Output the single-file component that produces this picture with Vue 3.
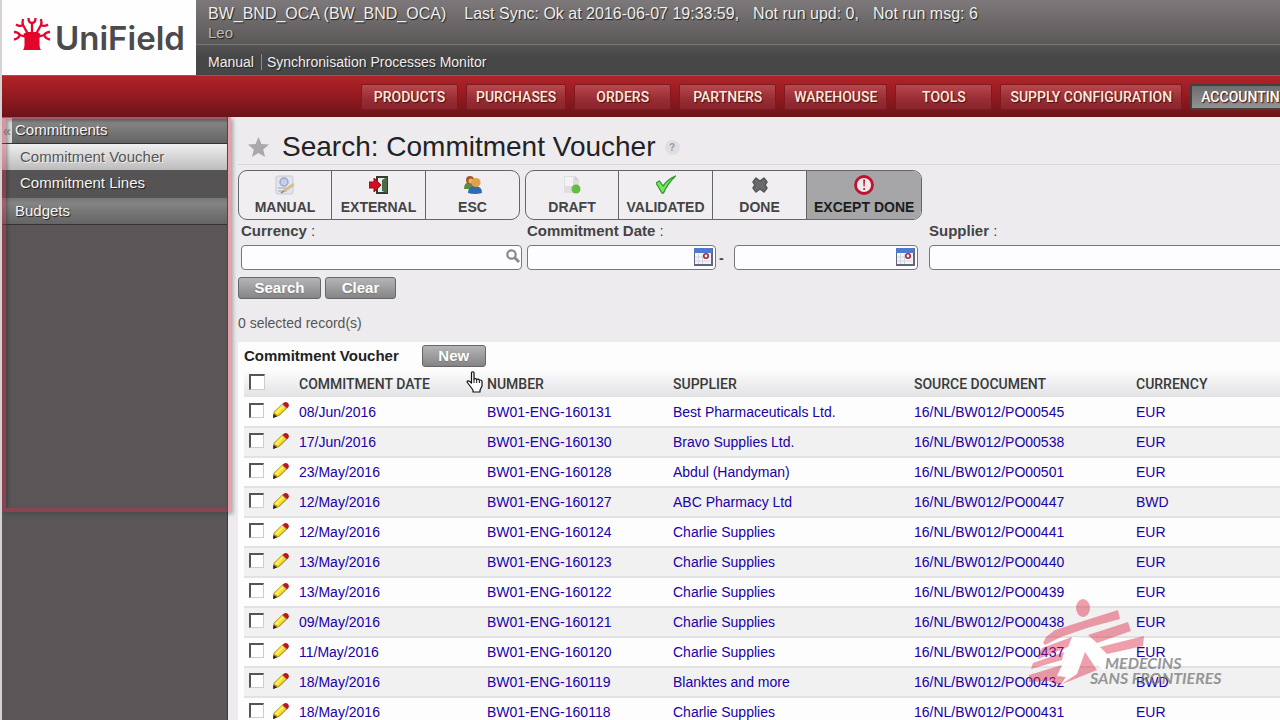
<script setup>
import { ref } from 'vue'

const tabs = ['Products', 'Purchases', 'Orders', 'Partners', 'Warehouse', 'Tools', 'Supply Configuration', 'Accounting']
const activeTab = 'Accounting'

const filterGroups = [
  [
    { label: 'Manual', icon: 'manual' },
    { label: 'External', icon: 'external' },
    { label: 'Esc', icon: 'esc' }
  ],
  [
    { label: 'Draft', icon: 'draft' },
    { label: 'Validated', icon: 'validated' },
    { label: 'Done', icon: 'done' },
    { label: 'Except Done', icon: 'except', active: true }
  ]
]

const currency = ref('')
const dateFrom = ref('')
const dateTo = ref('')
const supplier = ref('')

const rows = [
  ['08/Jun/2016', '160131', 'Best Pharmaceuticals Ltd.', '545', 'EUR'],
  ['17/Jun/2016', '160130', 'Bravo Supplies Ltd.', '538', 'EUR'],
  ['23/May/2016', '160128', 'Abdul (Handyman)', '501', 'EUR'],
  ['12/May/2016', '160127', 'ABC Pharmacy Ltd', '447', 'BWD'],
  ['12/May/2016', '160124', 'Charlie Supplies', '441', 'EUR'],
  ['13/May/2016', '160123', 'Charlie Supplies', '440', 'EUR'],
  ['13/May/2016', '160122', 'Charlie Supplies', '439', 'EUR'],
  ['09/May/2016', '160121', 'Charlie Supplies', '438', 'EUR'],
  ['11/May/2016', '160120', 'Charlie Supplies', '437', 'EUR'],
  ['18/May/2016', '160119', 'Blanktes and more', '432', 'BWD'],
  ['18/May/2016', '160118', 'Charlie Supplies', '431', 'EUR']
].map(([date, num, sup, po, cur]) => ({
  date,
  number: `BW01-ENG-${num}`,
  supplier: sup,
  source: `16/NL/BW012/PO00${po}`,
  currency: cur
}))
</script>

<template>
  <div class="page">
    <header class="top">
      <a href="#" class="logo" aria-label="UniField">
        <svg class="tree" viewBox="0 0 38 34" aria-hidden="true">
          <path d="M10 33q1.500-2 1.500-5v-8l-1-3 3-2h11l3 2-1 3v8q0 3 1.500 5z" fill="#e2062c" />
          <g fill="none" stroke="#e2062c" stroke-width="2.300" stroke-linejoin="round">
            <path d="M19 16V6M15.500 1q0 5 3.500 5t3.500-5" />
            <path d="M15 17 10 8M10 2q-1 4 0 6-3 2-7-.500" />
            <path d="M23 17 28 8M28 2q1 4 0 6 3 2 7-.500" />
            <path d="M13 20 7 18M1 15q4 0 6 3-2 4-6 4.500" />
            <path d="M25 20 31 18M37 15q-4 0-6 3 2 4 6 4.500" />
          </g>
        </svg>
        <span class="brand">UniField</span>
      </a>
      <div class="info">
        <div class="status">
          <div class="status-line">
            <span class="db">BW_BND_OCA (BW_BND_OCA)</span>
            <span>Last Sync: Ok at 2016-06-07 19:33:59,</span>
            <span>Not run upd: 0,</span>
            <span>Not run msg: 6</span>
          </div>
          <div class="user">Leo</div>
        </div>
        <nav class="shortcuts" aria-label="Shortcuts">
          <a href="#">Manual</a>
          <a href="#">Synchronisation Processes Monitor</a>
        </nav>
      </div>
    </header>

    <nav class="tabs" aria-label="Applications">
      <a v-for="t in tabs" :key="t" href="#" :class="{ active: t === activeTab }">{{ t.toUpperCase() }}</a>
    </nav>

    <div class="body">
      <aside class="side">
        <button class="collapse" aria-label="Collapse menu">«</button>
        <nav aria-label="Menu">
          <a href="#" class="group">Commitments</a>
          <a href="#" class="item current">Commitment Voucher</a>
          <a href="#" class="item">Commitment Lines</a>
          <a href="#" class="group">Budgets</a>
        </nav>
        <div class="highlight"></div>
      </aside>

      <main class="main">
        <div class="title">
          <svg class="star" viewBox="0 0 20 20" aria-hidden="true">
            <path d="M10 0l2.8 6.6 7.2.6-5.500 4.700 1.700 7.100L10 15.200 3.800 19l1.700-7.100L0 7.200l7.200-.6z" fill="#a9a8aa" />
          </svg>
          <h1>Search: Commitment Voucher</h1>
          <button class="help" aria-label="Help">?</button>
        </div>

        <div class="filters">
          <div v-for="(g, i) in filterGroups" :key="i" class="filter-group">
            <button v-for="f in g" :key="f.label" :class="{ active: f.active }">
              <svg v-if="f.icon === 'manual'" viewBox="0 0 20 20" aria-hidden="true">
                <rect x="1" y="1" width="17" height="18" rx="2" fill="#e3e5ee" stroke="#c6c9d2" />
                <circle cx="9" cy="7" r="4" fill="#c3d0e8" stroke="#9aa9c6" stroke-width="1.500" />
                <path d="M3 13h9M3 16h9" stroke="#b9bdcb" stroke-width="1.500" />
                <path d="M8 15l10-7 1.500 2.500L10 17l-3 1z" fill="#d8bd8a" />
                <path d="M6 18l3-2" stroke="#888" stroke-width="1.500" />
              </svg>
              <svg v-else-if="f.icon === 'external'" viewBox="0 0 20 20" aria-hidden="true">
                <path d="M7 1h12v18H7z" fill="#333a33" />
                <path d="M9 3h8v14H9z" fill="#e9ece7" />
                <path d="M13 5l5-3v16l-5-2z" fill="#4a6b45" />
                <path d="M0 7h5V3l7 7-7 7v-4H0z" fill="#d40d23" stroke="#91101b" />
              </svg>
              <svg v-else-if="f.icon === 'esc'" viewBox="0 0 20 20" aria-hidden="true">
                <path d="M1 14q0-7 6-7t5 7z" fill="#5e8c3a" />
                <circle cx="7" cy="5" r="4" fill="#a4582a" />
                <circle cx="8" cy="6" r="2.500" fill="#e9b374" />
                <path d="M5 18q0-7 7-7t7 7q-7 2-14 0z" fill="#2f6bb4" />
                <circle cx="13" cy="7.500" r="4.600" fill="#e2a04a" />
              </svg>
              <svg v-else-if="f.icon === 'draft'" viewBox="0 0 20 20" aria-hidden="true">
                <path d="M2 1h11l4 4v13H2z" fill="#dedee2" />
                <path d="M3 2h8v9H3z" fill="#f3f3f5" />
                <path d="M13 1l4 4h-4z" fill="#e4c6c0" />
                <circle cx="14" cy="14" r="4.500" fill="#62bd45" />
              </svg>
              <svg v-else-if="f.icon === 'validated'" viewBox="0 0 20 20" aria-hidden="true">
                <path d="M0 8l3.500-2 3.500 5Q12 4 19.500 1 12 8 7.500 18H6z" fill="#7be35f" stroke="#2e9a35" stroke-width="1.300" stroke-linejoin="round" />
              </svg>
              <svg v-else-if="f.icon === 'done'" viewBox="0 0 20 20" aria-hidden="true">
                <path d="M6 3l4 3 4-3 3 4-2 3 2 3-3 4-4-3-4 3-3-4 2-3-2-3z" fill="#6a6a6c" stroke="#58585a" stroke-width="1.500" stroke-linejoin="round" />
              </svg>
              <svg v-else viewBox="0 0 20 20" aria-hidden="true">
                <circle cx="10" cy="10" r="8.500" fill="#f3e9ea" stroke="#bf1230" stroke-width="2.800" />
                <path d="M9.200 4.500h1.800l-.4 7h-1z" fill="#b8122c" />
                <circle cx="10.100" cy="14" r="1" fill="#b8122c" />
              </svg>
              <span>{{ f.label.toUpperCase() }}</span>
            </button>
          </div>
        </div>

        <form class="search" @submit.prevent>
          <div class="fields">
            <div class="field">
              <label for="currency">Currency<i> :</i></label>
              <div class="box">
                <input id="currency" v-model="currency" type="text" />
                <svg class="lens" viewBox="0 0 14 14" aria-hidden="true">
                  <circle cx="5.500" cy="5.500" r="4.200" fill="none" stroke="#8a8a8c" stroke-width="2.200" />
                  <path d="M8.500 8.500l4.500 4.500" stroke="#8a8a8c" stroke-width="2.800" />
                </svg>
              </div>
            </div>
            <div class="field">
              <label for="from">Commitment Date<i> :</i></label>
              <div class="range">
                <div class="box">
                  <input id="from" v-model="dateFrom" type="text" />
                  <svg class="cal" viewBox="0 0 19 18" aria-hidden="true">
                    <path d="M0 0h19v18H0z" fill="#62667f" />
                    <path d="M1 0h16v16H1z" fill="#f4f4f8" />
                    <path d="M0 0h18v5H0z" fill="#4f7ad0" />
                    <path d="M1 9h15M1 13h15M4.500 6v10M8.500 6v10" stroke="#d4d5de" />
                    <circle cx="12" cy="8" r="2.200" fill="#fff" stroke="#a3263d" stroke-width="1.600" />
                  </svg>
                </div>
                <b>-</b>
                <div class="box">
                  <input v-model="dateTo" type="text" aria-label="Commitment Date to" />
                  <svg class="cal" viewBox="0 0 19 18" aria-hidden="true">
                    <path d="M0 0h19v18H0z" fill="#62667f" />
                    <path d="M1 0h16v16H1z" fill="#f4f4f8" />
                    <path d="M0 0h18v5H0z" fill="#4f7ad0" />
                    <path d="M1 9h15M1 13h15M4.500 6v10M8.500 6v10" stroke="#d4d5de" />
                    <circle cx="12" cy="8" r="2.200" fill="#fff" stroke="#a3263d" stroke-width="1.600" />
                  </svg>
                </div>
              </div>
            </div>
            <div class="field wide">
              <label for="supplier">Supplier<i> :</i></label>
              <div class="box"><input id="supplier" v-model="supplier" type="text" /></div>
            </div>
          </div>
          <div class="actions">
            <button class="btn search-btn" type="submit">Search</button>
            <button class="btn clear-btn" type="reset">Clear</button>
          </div>
        </form>

        <p class="count">0 selected record(s)</p>

        <section class="list">
          <div class="list-head">
            <h2>Commitment Voucher</h2>
            <button class="btn new-btn">New</button>
          </div>
          <table>
            <colgroup>
              <col class="c-check" /><col class="c-edit" /><col class="c-date" /><col class="c-num" />
              <col class="c-sup" /><col class="c-src" /><col />
            </colgroup>
            <thead>
              <tr>
                <th><input type="checkbox" aria-label="Select all" /></th>
                <th></th>
                <th>COMMITMENT DATE</th>
                <th>NUMBER</th>
                <th>SUPPLIER</th>
                <th>SOURCE DOCUMENT</th>
                <th>CURRENCY</th>
              </tr>
            </thead>
            <tbody>
              <tr v-for="r in rows" :key="r.number">
                <td><input type="checkbox" :aria-label="'Select ' + r.number" /></td>
                <td>
                  <button class="edit" :aria-label="'Edit ' + r.number">
                    <svg viewBox="0 0 16 16" aria-hidden="true">
                      <path d="M0 16l.5-6L10 1l5 4.500L6 14z" fill="#b08f22" />
                      <path d="M1 10.500L9.500 2l4 3.500L5 13.500z" fill="#f7df21" />
                      <path d="M2 11L10 3l1.200 1L3.500 12z" fill="#fff27a" />
                      <path d="M0 16l.5-4 3.500 2.500z" fill="#222" />
                      <path d="M9 2.500L10.500 1l4.500 4-1.500 1.700z" fill="#8f9aae" />
                      <path d="M10.500 1q2-1.800 4.200-.2 2 2 .5 4.400L14 6l-4-3.800z" fill="#c4121d" />
                    </svg>
                  </button>
                </td>
                <td><a href="#">{{ r.date }}</a></td>
                <td><a href="#">{{ r.number }}</a></td>
                <td><a href="#">{{ r.supplier }}</a></td>
                <td><a href="#">{{ r.source }}</a></td>
                <td><a href="#">{{ r.currency }}</a></td>
              </tr>
            </tbody>
          </table>
        </section>
      </main>
    </div>

    <svg class="watermark" viewBox="0 0 194 96" role="img" aria-label="Medecins Sans Frontieres">
      <path d="M44 38l18 1 14 17 10 14-12 1-16-18-9 22-12 11-11-4 14-26z" fill="#fff" opacity=".85" />
      <g fill="#dc1f3c" opacity=".42">
        <ellipse cx="55" cy="9" rx="7" ry="9" />
        <path d="M15 44l3-6 9-7L90 11l2 9-33 9-26 9-16 8z" />
        <path d="M60 36l40-13 3 9-34 12z" />
        <path d="M72 48l44-11-1 10-36 8z" />
        <path d="M14 49l30-11-4 10-30 12z" />
        <path d="M5 64l31-11-2 8-31 9z" />
        <path d="M1 76l33-10-5 11 9 1-6 8-12-4-19 1z" />
        <path d="M57 53l12 18-37 15 17-11z" />
      </g>
      <g class="wm-text">
        <text x="77" y="70">MEDECINS</text>
        <text x="62" y="85">SANS FRONTIERES</text>
      </g>
    </svg>

    <svg class="pointer" viewBox="0 0 17 22" aria-hidden="true">
      <path d="M5.500 1.500q1.500-1.500 2.500 0V8q2-1 2.700.5 2-.8 2.700.7 2-.7 2.600 1V15l-2 4v2H7v-2l-3-4-3-4q.5-2 2.500-.7L5.500 12z" fill="#fff" stroke="#111" stroke-width="1.200" stroke-linejoin="round" />
      <path d="M8 8v4M10.700 8.700V12M13.400 9.500V12" stroke="#111" />
    </svg>
  </div>
</template>

<style>
body {
  margin: 0;
  background: #edebee;
}
</style>

<style scoped>
.page {
  position: relative;
  box-sizing: border-box;
  height: 100vh;
  display: flex;
  flex-direction: column;
  overflow: hidden;
  border-left: 2px solid #d5d2d3;
  font: 14px/16px "Liberation Sans", Arial, sans-serif;
  color: #444;
}
.page *, .page *::before { box-sizing: border-box; }
a { color: inherit; text-decoration: none; }
button { font: inherit; color: inherit; padding: 0; border: 0; background: none; }
h1, h2, p { margin: 0; }

.top { display: flex; flex: none; height: 75px; background: #4a4848; }
.logo {
  flex: none;
  width: 194px;
  display: flex;
  align-items: center;
  gap: 4px;
  padding-left: 11px;
  background: #fefefe;
}
.tree { width: 38px; height: 34px; flex: none; margin-bottom: 7px; }
.brand { font: 600 33px/40px "Inter", "Liberation Sans", sans-serif; color: #4b4a4d; }
.info { flex: 1; min-width: 0; white-space: nowrap; text-shadow: 1px 1px 1px #222; color: #eee; }
.status {
  height: 45px;
  padding: 4px 12px 0;
  background: linear-gradient(#7d797a, #5b5858);
  border-bottom: 1px solid #777475;
}
.status-line { display: flex; gap: 14px; font-size: 16px; line-height: 20px; }
.db { margin-right: 4px; }
.user { font-size: 15px; line-height: 17px; color: #bdbbbb; }
.shortcuts { display: flex; align-items: center; height: 30px; padding: 4px 12px 0; background: linear-gradient(#555353, #484747 40%); }
.shortcuts a + a { margin-left: 7px; padding-left: 5px; border-left: 1px solid #8b8989; }

.tabs {
  flex: none;
  height: 42px;
  display: flex;
  align-items: center;
  gap: 8px;
  padding: 0 0 0 359px;
  background: linear-gradient(#b02428, #931a21 50%, #6b1419);
  border-top: 1px solid #c04848;
}
.tabs a {
  flex: none;
  min-width: 97px;
  height: 26px;
  padding: 0 9px;
  text-align: center;
  font: 500 14px/24px Roboto, "Liberation Sans", sans-serif;
  color: #fbe9dd;
  text-shadow: 1px 1px 1px #4c0d10;
  background: linear-gradient(#b8484d, #982c34 60%, #8a252d);
  border: 1px solid #7f1a20;
  border-radius: 2px;
}
.tabs a.active { background: linear-gradient(#6b6c6b, #929392); border: 2px solid #3f4040; color: #fff; line-height: 22px; }

.body { flex: 1; min-height: 0; display: flex; }
.side { position: relative; flex: none; width: 226px; background: #5a5657; border-right: 1px solid #3c3a3b; color: #f4f4f4; }
.side a { display: block; font-size: 15px; line-height: 26px; text-shadow: 1px 1px 1px #222; }
.group { height: 27px; padding-left: 13px; background: linear-gradient(#777677, #858485 20%, #656465); border-bottom: 1px solid #343334; }
.item { height: 28px; padding-left: 18px; background: #555354; }
.side .current { height: 26px; color: #555; background: linear-gradient(#f0eff0, #bdbcbd); text-shadow: 1px 1px 0 #eee; }
.collapse { position: absolute; left: 0; top: 1px; width: 10px; height: 25px; background: #d9d6d8; color: #777; }
.highlight {
  position: absolute;
  left: 0;
  top: 0;
  width: 229px;
  height: 395px;
  border: 4px solid rgba(214, 42, 70, .38);
  border-top-width: 2px;
  box-shadow: 2px 2px 4px rgba(40, 60, 60, .4), inset 2px 2px 3px rgba(30, 40, 40, .35);
  pointer-events: none;
}

.main { flex: 1; min-width: 0; overflow: hidden; padding-left: 10px; background: #edebee; }
.title { display: flex; align-items: center; height: 48px; padding: 13px 0 0 10px; border-bottom: 1px solid #d9d7da; }
.star { width: 21px; height: 21px; flex: none; margin-right: 13px; }
h1 { font-size: 28px; line-height: 32px; font-weight: normal; color: #222; white-space: nowrap; }
.help { width: 15px; height: 15px; margin-left: 9px; border-radius: 50%; background: #e0dee2; color: #999; font-size: 10px; line-height: 15px; font-weight: bold; }

.filters { display: flex; gap: 5px; margin-top: 5px; }
.filter-group { display: flex; border: 1px solid #666; border-radius: 9px; overflow: hidden; background: #f0eef1; }
.filter-group button {
  height: 48px;
  min-width: 92px;
  padding: 4px 7px 0;
  display: flex;
  flex-direction: column;
  align-items: center;
  gap: 4px;
  font-weight: bold;
  white-space: nowrap;
}
.filter-group button + button { min-width: 94px; border-left: 1px solid #666; }
.filter-group svg { width: 20px; height: 20px; }
.filter-group .active { background: #a6a6a8; color: #1d1d1d; }

.fields { display: flex; gap: 5px; padding-left: 3px; }
.field { flex: none; width: 281px; }
.field:nth-child(2) { width: 397px; }
.field.wide { flex: 1 0 400px; width: auto; }
label { display: block; font-size: 15px; line-height: 17px; font-weight: bold; margin: 2px 0 6px; white-space: pre; }
label i { font-style: normal; font-weight: normal; }
.box { position: relative; display: flex; }
.box input { width: 100%; min-width: 0; height: 25px; margin: 0; padding: 0 24px 0 5px; border: 1px solid #777; border-radius: 4px; background: #fdfcfe; font: inherit; }
.box svg { position: absolute; }
.lens { width: 14px; height: 14px; right: 2px; top: 4px; }
.cal { width: 19px; height: 18px; right: 3px; top: 3px; }
.range { display: flex; align-items: center; }
.range .box:first-child { width: 189px; }
.range .box:last-child { width: 184px; }
.range b { width: 18px; padding-left: 3px; }

.actions { display: flex; gap: 4px; margin-top: 7px; }
.btn {
  height: 22px;
  border: 1px solid #666;
  border-radius: 3px;
  background: linear-gradient(#b5b4b6, #858487);
  color: #fff;
  font-size: 15px;
  line-height: 20px;
  font-weight: bold;
  text-shadow: 0 1px 1px #777;
}
.search-btn { width: 83px; }
.clear-btn { width: 71px; }
.count { margin-top: 16px; line-height: 16px; color: #555; }

.list { margin-top: 11px; padding-left: 6px; background: #fdfdfe; min-height: 100%; }
.list-head { display: flex; align-items: center; gap: 23px; height: 28px; }
h2 { font-size: 15px; line-height: 18px; color: #222; white-space: nowrap; }
.new-btn { width: 64px; }

table { width: 100%; table-layout: fixed; border-collapse: collapse; white-space: nowrap; }
.c-check { width: 29px; }
.c-edit { width: 26px; }
.c-date { width: 188px; }
.c-num { width: 186px; }
.c-sup { width: 241px; }
.c-src { width: 222px; }
th, td { padding: 0; text-align: left; vertical-align: middle; }
thead tr { height: 27px; background: linear-gradient(#fdfdfe, #e2e1e3); }
th { font: 500 14px/16px Roboto, "Liberation Sans", sans-serif; color: #3a3a3a; }
tbody tr { height: 30px; border-bottom: 2px solid #e2e1e3; }
tbody tr:nth-child(even) { background: #f1f1f2; }
td a { color: #2000a8; }
table input {
  appearance: none;
  display: block;
  width: 15px;
  height: 15px;
  margin: 0 0 3px 5px;
  background: #fff;
  border: 2px solid #555;
  border-right: 1px solid #ccc;
  border-bottom: 1px solid #ccc;
}
thead input { width: 16px; height: 16px; }
.edit { display: block; width: 16px; height: 16px; margin-bottom: 3px; }
.edit svg { display: block; width: 16px; height: 16px; }

.watermark { position: absolute; right: 58px; bottom: 25px; width: 194px; height: 96px; pointer-events: none; }
.wm-text { font: italic bold 16px Lato, "Liberation Sans", sans-serif; fill: #777; opacity: .75; }
.pointer { position: absolute; left: 464px; top: 371px; width: 17px; height: 22px; pointer-events: none; }
</style>
